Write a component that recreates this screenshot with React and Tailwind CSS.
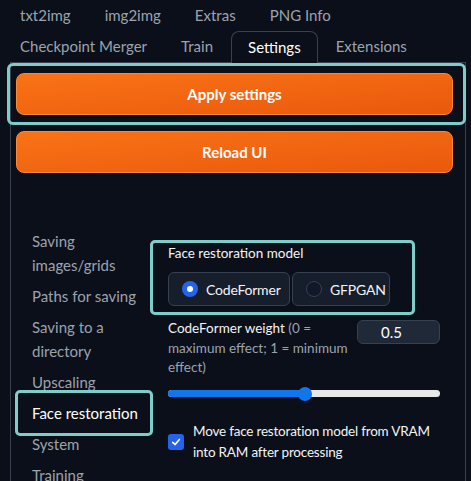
import React from "react";

const font = { fontFamily: "Lato, 'Noto Sans', sans-serif" };

function Tab({ children, active }) {
  return (
    <div
      className={
        "h-[31px] px-4 flex items-center text-[15px] whitespace-nowrap " +
        (active
          ? "text-white border border-b-0 border-[#374151] rounded-t-[8px] bg-[#0b0f19] relative z-10 -mb-px h-[32px]"
          : "text-[#9ca3af]")
      }
    >
      {children}
    </div>
  );
}

function Radio({ label, checked, w }) {
  return (
    <div
      className={
        "h-[34px] flex items-center pl-[13px] gap-[8px] rounded-[6px] border border-[#374151] bg-[#161d2b] " + w
      }
    >
      {checked ? (
        <div className="w-[16px] h-[16px] rounded-full bg-[#2563eb] flex items-center justify-center shrink-0">
          <div className="w-[6px] h-[6px] rounded-full bg-white" />
        </div>
      ) : (
        <div className="w-[16px] h-[16px] rounded-full bg-[#111827] border border-[#374151] shrink-0" />
      )}
      <span className="text-[14px] tracking-[-0.2px] text-[#f3f4f6] whitespace-nowrap">{label}</span>
    </div>
  );
}

export default function App() {
  const sideItems = [
    ["Saving", "images/grids"],
    ["Paths for saving"],
    ["Saving to a", "directory"],
    ["Upscaling"],
    ["Face restoration"],
    ["System"],
    ["Training"],
  ];
  return (
    <div className="w-[471px] h-[481px] bg-[#0b0f19] overflow-hidden relative" style={font}>
      <div className="flex pl-[4px] gap-[2px]">
        <Tab>txt2img</Tab>
        <Tab>img2img</Tab>
        <Tab>Extras</Tab>
        <Tab>PNG Info</Tab>
      </div>
      <div className="flex pl-[4px] gap-[2px] items-end">
        <Tab>Checkpoint Merger</Tab>
        <Tab>Train</Tab>
        <Tab active>Settings</Tab>
        <Tab>Extensions</Tab>
      </div>
      <div className="ml-[10px] w-[456px] h-[500px] border border-[#374151] border-b-0 pl-[5px] pr-[11px] pt-[10px]">
        <button className="w-[437px] h-[42px] rounded-[8px] bg-linear-to-br from-[#f97316] to-[#ea580c] border border-[#f98a3a] text-white font-bold text-[15px]">
          Apply settings
        </button>
        <button className="mt-[16px] w-[437px] h-[42px] rounded-[8px] bg-linear-to-br from-[#f97316] to-[#ea580c] border border-[#f98a3a] text-white font-bold text-[15px]">
          Reload UI
        </button>
        <div className="flex mt-[56px]">
          <div className="ml-[16px] w-[136px] flex flex-col gap-[7px] text-[15px] leading-[24px]">
            {sideItems.map((lines, i) => (
              <div key={i} className={lines[0] === "Face restoration" ? "text-white" : "text-[#9ca3af]"}>
                {lines.map((l, j) => (
                  <div key={j} className="whitespace-nowrap">{l}</div>
                ))}
              </div>
            ))}
          </div>
          <div className="w-[272px] pt-[14px] flex flex-col">
            <div className="text-[13.5px] leading-[20px] text-[#f3f4f6]">Face restoration model</div>
            <div className="flex gap-[2px] mt-[9px]">
              <Radio label="CodeFormer" checked w="w-[122px]" />
              <Radio label="GFPGAN" w="w-[98px]" />
            </div>
            <div className="flex justify-between mt-[13px]">
              <div className="text-[13.5px] leading-[19.5px] text-[#9ca3af] whitespace-nowrap">
                <span className="text-[#f3f4f6]">CodeFormer weight</span> (0 =
                <br />
                maximum effect; 1 = minimum
                <br />
                effect)
              </div>
              <div className="w-[83px] h-[24px] mt-[1px] rounded-[6px] bg-[#1f2937] border border-[#374151] text-[15px] text-white flex items-center justify-center pr-[14px] leading-none">
                0.5
              </div>
            </div>
            <div className="relative h-[14px] mt-[9px] flex items-center">
              <div className="w-full h-[7px] rounded-full bg-[#e8e8e8] overflow-hidden">
                <div className="h-full bg-[#0f76ee]" style={{ width: "137px" }} />
              </div>
              <div className="absolute left-[130px] top-0 w-[14px] h-[14px] rounded-full bg-[#0f76ee]" />
            </div>
            <div className="flex items-center gap-[9px] mt-[20px]">
              <div className="w-[16px] h-[16px] rounded-[3px] bg-[#2563eb] flex items-center justify-center shrink-0">
                <svg width="10" height="10" viewBox="0 0 12 12">
                  <path d="M2 6.5 L5 9 L10 3" stroke="white" strokeWidth="2" fill="none" strokeLinecap="round" strokeLinejoin="round" />
                </svg>
              </div>
              <div className="text-[13.5px] tracking-[-0.2px] leading-[21px] text-[#f3f4f6] whitespace-nowrap">
                Move face restoration model from VRAM
                <br />
                into RAM after processing
              </div>
            </div>
          </div>
        </div>
      </div>

      <div className="absolute left-[7px] top-[63px] w-[459px] h-[62px] border-[3px] border-[#7fcdc8] rounded-[6px] pointer-events-none" />
      <div className="absolute left-[150px] top-[240px] w-[265px] h-[75px] border-[3px] border-[#7fcdc8] rounded-[5px] pointer-events-none" />
      <div className="absolute left-[15px] top-[390px] w-[138px] h-[46px] border-[3px] border-[#7fcdc8] rounded-[5px] pointer-events-none" />
    </div>
  );
}
